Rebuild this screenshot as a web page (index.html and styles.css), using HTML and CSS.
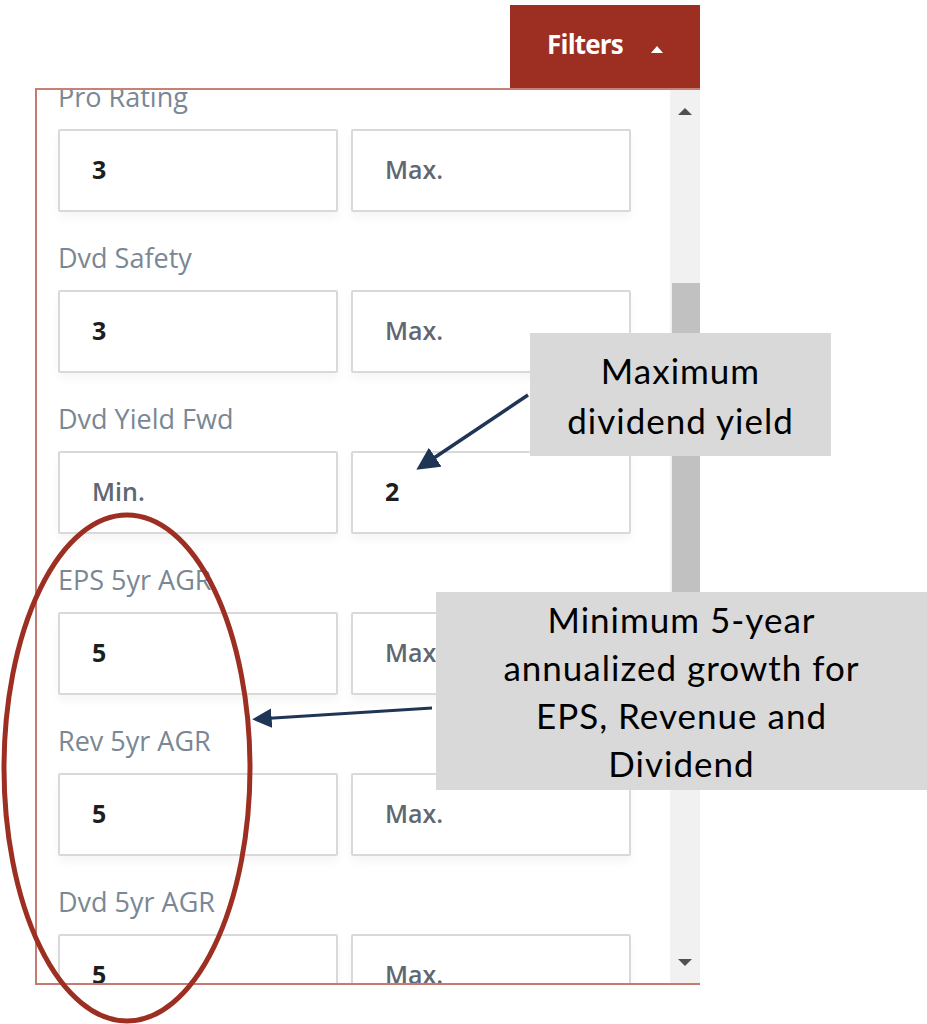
FILE: index.html
```html
<!DOCTYPE html>
<html lang="en">
<head>
  <meta charset="UTF-8">
  <meta name="viewport" content="width=device-width, initial-scale=1.0">
  <title>Screener Filters</title>
  <link rel="stylesheet" href="styles.css">
</head>
<body>
  <div class="page">
    <div class="widget">
      <div class="toolbar">
        <button class="filters-toggle" type="button">Filters <span class="caret"></span></button>
      </div>

      <div class="filter-panel">
        <div class="filter-scroll">
          <div class="filter-list">
            <div class="field">
              <label>Pro Rating</label>
              <div class="range">
                <input type="text" value="3" placeholder="Min.">
                <input type="text" placeholder="Max.">
              </div>
            </div>
            <div class="field">
              <label>Dvd Safety</label>
              <div class="range">
                <input type="text" value="3" placeholder="Min.">
                <input type="text" placeholder="Max.">
              </div>
            </div>
            <div class="field">
              <label>Dvd Yield Fwd</label>
              <div class="range">
                <input type="text" placeholder="Min.">
                <input type="text" value="2" placeholder="Max.">
              </div>
            </div>
            <div class="field">
              <label>EPS 5yr AGR</label>
              <div class="range">
                <input type="text" value="5" placeholder="Min.">
                <input type="text" placeholder="Max.">
              </div>
            </div>
            <div class="field">
              <label>Rev 5yr AGR</label>
              <div class="range">
                <input type="text" value="5" placeholder="Min.">
                <input type="text" placeholder="Max.">
              </div>
            </div>
            <div class="field">
              <label>Dvd 5yr AGR</label>
              <div class="range">
                <input type="text" value="5" placeholder="Min.">
                <input type="text" placeholder="Max.">
              </div>
            </div>
          </div>
        </div>

        <div class="scrollbar">
          <span class="scroll-arrow up"></span>
          <div class="scroll-track"><div class="scroll-thumb"></div></div>
          <span class="scroll-arrow down"></span>
        </div>
      </div>
    </div>

    <!-- notes drawn on top of the panel -->
    <svg class="annotations" width="927" height="1024" viewBox="0 0 927 1024">
      <defs>
        <marker id="arrowhead" viewBox="0 0 10 10" refX="7" refY="5" markerWidth="6.5" markerHeight="6.5" orient="auto">
          <path d="M0 0 L10 5 L0 10 z" fill="#1f3556"/>
        </marker>
      </defs>
      <line x1="528" y1="395" x2="422" y2="466" stroke="#1f3556" stroke-width="3.5" marker-end="url(#arrowhead)"/>
      <line x1="432" y1="708" x2="258" y2="719" stroke="#1f3556" stroke-width="3" marker-end="url(#arrowhead)"/>
      <ellipse cx="127" cy="768" rx="123" ry="253" fill="none" stroke="#9c2f21" stroke-width="5"/>
    </svg>

    <div class="callout callout-yield">Maximum<br>dividend yield</div>
    <div class="callout callout-growth">Minimum 5-year<br>annualized growth for<br>EPS, Revenue and<br>Dividend</div>
  </div>
</body>
</html>
```

FILE: styles.css
```css
body {
  margin: 0;
  background: #fff;
  font-family: "Open Sans", Arial, sans-serif;
}
.page {
  position: relative;
  width: 927px;
  height: 1024px;
  overflow: hidden;
}
.widget {
  width: 700px;
}
.toolbar {
  display: flex;
  justify-content: flex-end;
  padding-top: 5px;
}
.filters-toggle {
  width: 190px;
  height: 83px;
  background: #9c2f22;
  color: #fff;
  border: none;
  font-family: "Open Sans", Arial, sans-serif;
  font-size: 26px;
  font-weight: 700;
  letter-spacing: -0.8px;
  display: flex;
  align-items: center;
  justify-content: center;
  gap: 28px;
  padding: 0 0 6px 0;
}
.caret {
  width: 0;
  height: 0;
  border-left: 6px solid transparent;
  border-right: 6px solid transparent;
  border-bottom: 7px solid #fff;
  margin-top: 12px;
}
.filter-panel {
  margin-left: 35px;
  height: 893px;
  border-top: 2px solid #c98075;
  border-left: 2px solid #c77a70;
  border-bottom: 2px solid #c77a70;
  display: flex;
}
.filter-scroll {
  flex: 1;
  overflow: hidden;
  padding-left: 21px;
}
.filter-list {
  margin-top: -9px;
}
.field {
  margin-bottom: 30px;
}
.field label {
  display: block;
  height: 32px;
  line-height: 32px;
  margin-bottom: 16px;
  font-size: 27px;
  color: #7a8794;
}
.range {
  display: flex;
  gap: 13px;
}
.range input {
  box-sizing: border-box;
  width: 280px;
  height: 83px;
  border: 2px solid #d9d9d9;
  border-radius: 2px;
  box-shadow: 0 6px 10px rgba(0, 0, 0, 0.04);
  padding: 0 0 4px 32px;
  font-family: "Open Sans", Arial, sans-serif;
  font-size: 25px;
  font-weight: 700;
  color: #1e1e1e;
  background: #fff;
  outline: none;
}
.range input::placeholder {
  color: #5f6872;
  font-weight: 600;
  opacity: 1;
}
.scrollbar {
  width: 30px;
  background: #f1f1f1;
  display: flex;
  flex-direction: column;
  align-items: stretch;
}
.scroll-arrow {
  height: 30px;
  display: flex;
  align-items: center;
  justify-content: center;
}
.scroll-arrow::before {
  content: "";
  width: 0;
  height: 0;
  border-left: 7px solid transparent;
  border-right: 7px solid transparent;
}
.scroll-arrow.up {
  margin-top: 6px;
}
.scroll-arrow.up::before {
  border-bottom: 7px solid #505050;
}
.scroll-arrow.down {
  margin-bottom: 6px;
}
.scroll-arrow.down::before {
  border-top: 7px solid #505050;
}
.scroll-track {
  flex: 1;
  padding-left: 2px;
}
.scroll-thumb {
  margin-top: 157px;
  height: 360px;
  background: #c1c1c1;
}
.annotations {
  position: absolute;
  left: 0;
  top: 0;
  z-index: 3;
  pointer-events: none;
}
.callout {
  position: absolute;
  z-index: 2;
  background: #d9d9d9;
  color: #000;
  font-family: Lato, "Open Sans", sans-serif;
  font-size: 35px;
  letter-spacing: 1px;
  text-align: center;
  box-sizing: border-box;
  display: flex;
  align-items: center;
  justify-content: center;
}
.callout-yield {
  left: 530px;
  top: 333px;
  width: 301px;
  height: 123px;
  line-height: 50px;
}
.callout-growth {
  left: 436px;
  top: 592px;
  width: 491px;
  height: 198px;
  line-height: 48px;
}
```
